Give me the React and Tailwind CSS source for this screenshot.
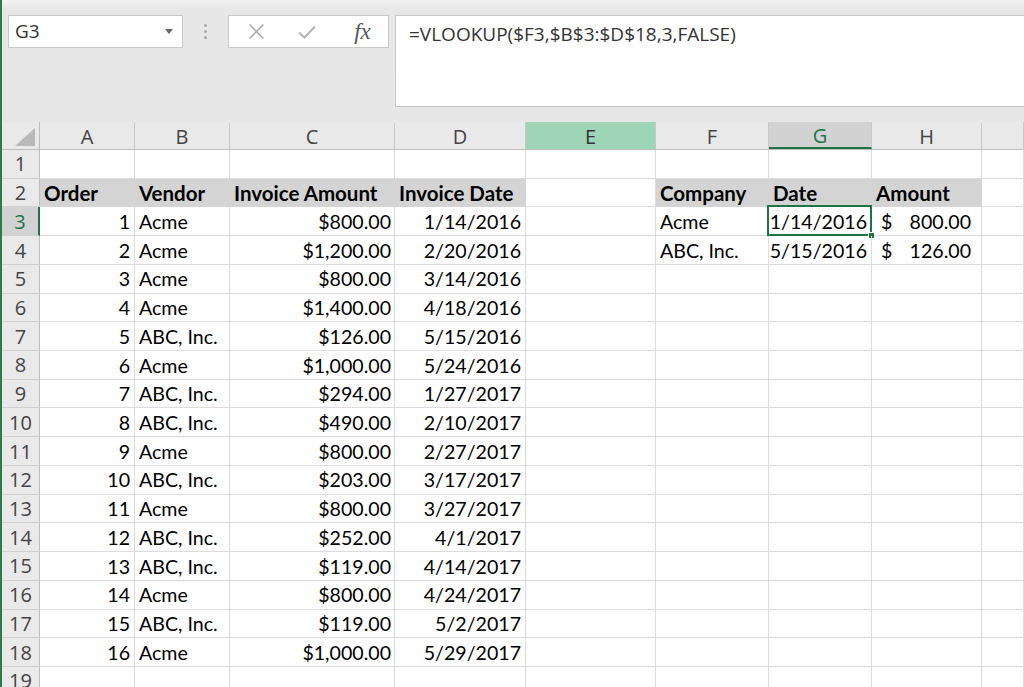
import React from "react";

const cellFont = "font-['Lato',sans-serif]";
const uiFont = "font-['Open_Sans',sans-serif]";
const gridCols =
  "grid grid-cols-[38px_95px_95px_165px_131px_130px_113px_103px_110px_1fr]";

const data = [
  [1, "Acme", "$800.00", "1/14/2016"],
  [2, "Acme", "$1,200.00", "2/20/2016"],
  [3, "Acme", "$800.00", "3/14/2016"],
  [4, "Acme", "$1,400.00", "4/18/2016"],
  [5, "ABC, Inc.", "$126.00", "5/15/2016"],
  [6, "Acme", "$1,000.00", "5/24/2016"],
  [7, "ABC, Inc.", "$294.00", "1/27/2017"],
  [8, "ABC, Inc.", "$490.00", "2/10/2017"],
  [9, "Acme", "$800.00", "2/27/2017"],
  [10, "ABC, Inc.", "$203.00", "3/17/2017"],
  [11, "Acme", "$800.00", "3/27/2017"],
  [12, "ABC, Inc.", "$252.00", "4/1/2017"],
  [13, "ABC, Inc.", "$119.00", "4/14/2017"],
  [14, "Acme", "$800.00", "4/24/2017"],
  [15, "ABC, Inc.", "$119.00", "5/2/2017"],
  [16, "Acme", "$1,000.00", "5/29/2017"],
];

const lookup = {
  3: ["Acme", "1/14/2016", "800.00"],
  4: ["ABC, Inc.", "5/15/2016", "126.00"],
};

function Cell({ children, align = "left", bold, gray, className = "" }) {
  const base =
    "relative flex items-center pt-[1px] leading-none whitespace-nowrap overflow-visible text-black border-b " +
    (gray ? "bg-[#d4d4d4] border-[#d4d4d4] " : "border-r border-[#dcdcdc] ");
  const al = align === "right" ? "justify-end pr-[4px] " : "justify-start pl-[4px] ";
  return (
    <div
      className={
        base +
        al +
        (bold ? "font-bold text-[20.5px] " : "text-[19.6px] ") +
        cellFont +
        " " +
        className
      }
    >
      {children}
    </div>
  );
}

function RowHeader({ n, selected }) {
  return (
    <div
      className={
        "flex items-center justify-center pt-[1px] leading-none text-[20px] border-b border-[#d0d0d0] " +
        uiFont +
        " " +
        (selected
          ? "bg-[#d2d2d2] text-[#217346] border-r-2 border-r-[#217346]"
          : "bg-[#e9e9e9] text-[#444] border-r border-r-[#bdbdbd]")
      }
    >
      {n}
    </div>
  );
}

function DataRow({ r }) {
  const d = r >= 3 && r <= 18 ? data[r - 3] : null;
  const lk = lookup[r];
  const isHead = r === 2;
  return (
    <div className={gridCols + " grid-rows-[28.72px] h-[28.72px]"}>
      <RowHeader n={r} selected={r === 3} />
      {isHead ? (
        <>
          <Cell bold gray>Order</Cell>
          <Cell bold gray>Vendor</Cell>
          <Cell bold gray>Invoice Amount</Cell>
          <Cell bold gray>Invoice Date</Cell>
          <Cell />
          <Cell bold gray>Company</Cell>
          <Cell bold gray>Date</Cell>
          <Cell bold gray>Amount</Cell>
          <Cell />
        </>
      ) : (
        <>
          <Cell align="right">{d ? d[0] : ""}</Cell>
          <Cell>{d ? d[1] : ""}</Cell>
          <Cell align="right" className="!pr-[3px]">{d ? d[2] : ""}</Cell>
          <Cell align="right">{d ? d[3] : ""}</Cell>
          <Cell />
          <Cell>{lk ? lk[0] : ""}</Cell>
          <Cell align="right">
            {lk ? lk[1] : ""}
            {r === 3 && (
              <>
                <div className="absolute left-[-2px] top-[-2px] right-[-1px] bottom-[-1px] border-2 border-[#217346] pointer-events-none" />
                <div className="absolute right-[-4px] bottom-[-4px] w-[7px] h-[7px] bg-[#217346] border border-white" />
              </>
            )}
          </Cell>
          {lk ? (
            <div
              className={
                "flex items-center pt-[1px] leading-none justify-between pl-[9px] pr-[10px] text-[19.6px] text-black border-r border-b border-[#dcdcdc] " +
                cellFont
              }
            >
              <span>$</span>
              <span>{lk[2]}</span>
            </div>
          ) : (
            <Cell />
          )}
          <Cell />
        </>
      )}
    </div>
  );
}

export default function App() {
  const letters = ["A", "B", "C", "D", "E", "F", "G", "H", ""];
  return (
    <div className="w-[1024px] h-[687px] overflow-hidden bg-white border-l-2 border-[#2f7a4c]">
      {/* Top formula area */}
      <div className="h-[122px] bg-gradient-to-b from-[#f2f2f2] via-[#e7e7e7] via-[8%] to-[#e6e6e6] flex items-start pt-[15px]">
        <div className={"ml-[6px] w-[175px] h-[33px] bg-white border border-[#c9c9c9] flex items-center justify-between pl-[6px] pr-[9px] text-[19px] text-[#333] " + uiFont}>
          <span>G3</span>
          <svg width="8" height="5" viewBox="0 0 8 5">
            <path d="M0 0 L8 0 L4 5 Z" fill="#6a6a6a" />
          </svg>
        </div>
        <div className="w-[45px] h-[33px] flex flex-col items-center justify-center gap-[3px]">
          <div className="w-[3px] h-[3px] rounded-full bg-[#a8a8a8]" />
          <div className="w-[3px] h-[3px] rounded-full bg-[#a8a8a8]" />
          <div className="w-[3px] h-[3px] rounded-full bg-[#a8a8a8]" />
        </div>
        <div className="w-[161px] h-[33px] bg-white border border-[#c9c9c9] flex items-center">
          <div className="w-[52px] flex justify-center pl-[2px]">
            <svg width="17" height="17" viewBox="0 0 16 16">
              <path d="M1.5 1.5 L14.5 14.5 M14.5 1.5 L1.5 14.5" stroke="#a6a6a6" strokeWidth="1.4" fill="none" />
            </svg>
          </div>
          <div className="w-[52px] flex justify-center">
            <svg width="18" height="14" viewBox="0 0 18 14">
              <path d="M1 7.5 L6.5 12.5 L17 1.5" stroke="#b4b4b4" strokeWidth="2.2" fill="none" />
            </svg>
          </div>
          <div className="flex-1 flex justify-center pl-[4px]">
            <span className="font-['Liberation_Serif',serif] italic text-[23px] text-[#555] leading-none">
              fx
            </span>
          </div>
        </div>
        <div className={"ml-[6px] flex-1 h-[92px] bg-white border-y border-l border-[#c9c9c9] pl-[13px] pt-[4px] text-[19px] text-[#333] " + uiFont}>
          =VLOOKUP($F3,$B$3:$D$18,3,FALSE)
        </div>
      </div>

      {/* Column header row */}
      <div className={gridCols + " grid-rows-[27px] h-[27px] bg-[#e9e9e9] border-b border-[#bdbdbd] box-content"}>
        <div className="relative border-r border-[#bdbdbd]">
          <svg className="absolute left-[13px] top-[6px]" width="20" height="18" viewBox="0 0 20 18">
            <path d="M20 0 L20 18 L0 18 Z" fill="#b9b9b9" />
          </svg>
        </div>
        {letters.map((l, i) => {
          let cls = "bg-[#e9e9e9] text-[#444] border-r border-[#c8c8c8]";
          if (l === "E") cls = "bg-[#9fd5b7] text-[#333] border-r border-[#c8c8c8]";
          if (l === "G")
            cls = "bg-[#d2d2d2] text-[#217346] border-r border-[#c8c8c8] border-b-2 border-b-[#217346]";
          return (
            <div
              key={i}
              className={"flex items-center justify-center pt-[2px] leading-none text-[20px] " + uiFont + " " + cls}
            >
              {l}
            </div>
          );
        })}
      </div>

      {Array.from({ length: 19 }, (_, i) => i + 1).map((r) => (
        <DataRow key={r} r={r} />
      ))}
    </div>
  );
}
